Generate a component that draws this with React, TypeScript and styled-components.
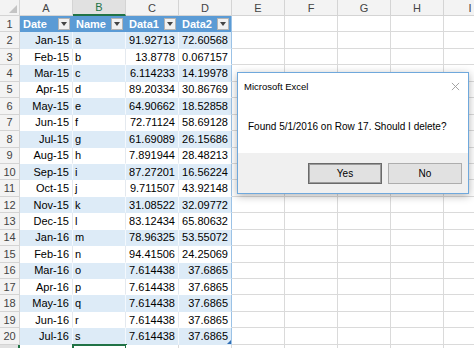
import React from "react";
import styled, { createGlobalStyle } from "styled-components";

const GlobalStyle = createGlobalStyle`
  html, body {
    margin: 0;
    padding: 0;
    background: #ffffff;
    overflow: hidden;
  }
  body {
    font-family: "Liberation Sans", Arial, sans-serif;
  }
`;

const COLS = ["A", "B", "C", "D", "E", "F", "G", "H", "I"];

const rows: [string, string, string, string][] = [
  ["Jan-15", "a", "91.92713", "72.60568"],
  ["Feb-15", "b", "13.8778", "0.067157"],
  ["Mar-15", "c", "6.114233", "14.19978"],
  ["Apr-15", "d", "89.20334", "30.86769"],
  ["May-15", "e", "64.90662", "18.52858"],
  ["Jun-15", "f", "72.71124", "58.69128"],
  ["Jul-15", "g", "61.69089", "26.15686"],
  ["Aug-15", "h", "7.891944", "28.48213"],
  ["Sep-15", "i", "87.27201", "16.56224"],
  ["Oct-15", "j", "9.711507", "43.92148"],
  ["Nov-15", "k", "31.08522", "32.09772"],
  ["Dec-15", "l", "83.12434", "65.80632"],
  ["Jan-16", "m", "78.96325", "53.55072"],
  ["Feb-16", "n", "94.41506", "24.25069"],
  ["Mar-16", "o", "7.614438", "37.6865"],
  ["Apr-16", "p", "7.614438", "37.6865"],
  ["May-16", "q", "7.614438", "37.6865"],
  ["Jun-16", "r", "7.614438", "37.6865"],
  ["Jul-16", "s", "7.614438", "37.6865"],
];

const headers = ["Date", "Name", "Data1", "Data2"];

const Page = styled.div`
  position: relative;
  width: 474px;
  height: 348px;
  overflow: hidden;
`;

const Sheet = styled.div`
  display: grid;
  grid-template-columns: 20px repeat(9, 53px);
  grid-template-rows: 16px repeat(21, 16.45px);
  font-size: 11px;
  color: #000;
`;

const Corner = styled.div`
  position: relative;
  background: #f3f3f3;
  border-right: 1px solid #d4d4d4;
  border-bottom: 1px solid #d4d4d4;
  box-sizing: border-box;

  &::after {
    content: "";
    position: absolute;
    right: 2px;
    bottom: 2px;
    border-style: solid;
    border-width: 0 0 8px 8px;
    border-color: transparent transparent #c4c4c4 transparent;
  }
`;

const ColHead = styled.div<{ $selected?: boolean }>`
  box-sizing: border-box;
  display: flex;
  align-items: center;
  justify-content: center;
  background: ${(p) => (p.$selected ? "#e1e1e1" : "#f3f3f3")};
  color: ${(p) => (p.$selected ? "#217346" : "#444")};
  border-right: 1px solid #d4d4d4;
  border-bottom: ${(p) => (p.$selected ? "2px solid #217346" : "1px solid #d4d4d4")};
  font-size: 11px;
`;

const RowHead = styled.div<{ $selected?: boolean }>`
  box-sizing: border-box;
  display: flex;
  align-items: center;
  justify-content: center;
  background: ${(p) => (p.$selected ? "#e1e1e1" : "#f3f3f3")};
  color: ${(p) => (p.$selected ? "#217346" : "#444")};
  border-right: ${(p) => (p.$selected ? "2px solid #217346" : "1px solid #d4d4d4")};
  border-bottom: 1px solid #d4d4d4;
  font-size: 11px;
`;

const Cell = styled.div<{ $band?: "blue" | "white"; $align?: "left" | "right"; $edge?: boolean; $active?: boolean }>`
  box-sizing: border-box;
  position: relative;
  display: flex;
  align-items: center;
  justify-content: ${(p) => (p.$align === "right" ? "flex-end" : "flex-start")};
  padding: 0 3px 0 2px;
  white-space: nowrap;
  background: ${(p) => (p.$band === "blue" ? "#ddebf7" : "#ffffff")};
  border-right: 1px solid
    ${(p) => (p.$edge ? "#9bc2e6" : p.$band === "blue" ? "#f3f8fd" : p.$band === "white" ? "#e4e9ef" : "#dadada")};
  border-bottom: 1px solid ${(p) => (p.$band ? "transparent" : "#dadada")};
  ${(p) => (p.$active ? "outline: 2px solid #217346; outline-offset: -1px;" : "")}
`;

const ResizeMark = styled.span`
  position: absolute;
  right: 0;
  bottom: 0;
  border-style: solid;
  border-width: 0 0 4px 4px;
  border-color: transparent transparent #2f6eb5 transparent;
`;

const HeadCell = styled.div<{ $edge?: boolean }>`
  box-sizing: border-box;
  display: flex;
  align-items: center;
  justify-content: space-between;
  padding: 0 2px 0 3px;
  background: #5b9bd5;
  color: #ffffff;
  font-weight: bold;
  font-size: 11px;
  border-right: 1px solid ${(p) => (p.$edge ? "#9bc2e6" : "#5b9bd5")};
`;

const FilterButton = styled.span`
  box-sizing: border-box;
  width: 12px;
  height: 12px;
  display: flex;
  align-items: center;
  justify-content: center;
  background: #f1f1f1;
  border: 1px solid #b4b4b4;

  &::before {
    content: "";
    border-style: solid;
    border-width: 4px 3px 0 3px;
    border-color: #444 transparent transparent transparent;
  }
`;

const Dialog = styled.div`
  position: absolute;
  left: 237px;
  top: 72px;
  width: 232px;
  box-sizing: border-box;
  background: #ffffff;
  border: 1px solid #6fa8dc;
  box-shadow: 0 2px 8px rgba(0, 0, 0, 0.3);
  font-family: "Liberation Sans", Arial, sans-serif;
  color: #000;
`;

const TitleBar = styled.div`
  height: 26px;
  display: flex;
  align-items: center;
  justify-content: space-between;
  padding: 0 8px 0 6px;
  font-size: 9.5px;
`;

const CloseIcon = styled.svg`
  width: 9px;
  height: 9px;
`;

const Message = styled.div`
  height: 54px;
  display: flex;
  align-items: center;
  padding: 0 10px;
  font-size: 10px;
`;

const Footer = styled.div`
  height: 40px;
  box-sizing: border-box;
  display: flex;
  justify-content: flex-end;
  align-items: flex-start;
  gap: 6px;
  padding: 10px 6px 0 0;
  background: #f0f0f0;
`;

const Button = styled.button<{ $primary?: boolean }>`
  width: 74px;
  height: 21px;
  box-sizing: border-box;
  background: #e1e1e1;
  border: 1px solid ${(p) => (p.$primary ? "#6a6a6a" : "#adadad")};
  box-shadow: ${(p) => (p.$primary ? "inset 0 0 0 1px #9a9a9a" : "none")};
  font-family: "Liberation Sans", Arial, sans-serif;
  font-size: 10px;
  color: #000;
  padding: 0;
`;

export default function App() {
  const cells: React.ReactNode[] = [];

  cells.push(<Corner key="corner" />);
  COLS.forEach((c) =>
    cells.push(
      <ColHead key={`h-${c}`} $selected={c === "B"}>
        {c}
      </ColHead>
    )
  );

  // row 1: table headers
  cells.push(<RowHead key="r1">1</RowHead>);
  headers.forEach((h, i) =>
    cells.push(
      <HeadCell key={`th-${h}`} $edge={i === 3}>
        {h}
        <FilterButton />
      </HeadCell>
    )
  );
  COLS.slice(4).forEach((c) => cells.push(<Cell key={`1-${c}`} />));

  rows.forEach((r, idx) => {
    const n = idx + 2;
    const band = n % 2 === 0 ? "blue" : "white";
    const last = idx === rows.length - 1;
    cells.push(<RowHead key={`r${n}`}>{n}</RowHead>);
    cells.push(
      <Cell key={`${n}-A`} $band={band} $align="right">
        {r[0]}
      </Cell>
    );
    cells.push(
      <Cell key={`${n}-B`} $band={band}>
        {r[1]}
      </Cell>
    );
    cells.push(
      <Cell key={`${n}-C`} $band={band} $align="right">
        {r[2]}
      </Cell>
    );
    cells.push(
      <Cell key={`${n}-D`} $band={band} $align="right" $edge>
        {r[3]}
        {last && <ResizeMark />}
      </Cell>
    );
    COLS.slice(4).forEach((c) => cells.push(<Cell key={`${n}-${c}`} />));
  });

  // row 21 is only a sliver at the bottom edge, so its label is left out
  cells.push(<RowHead key="r21" $selected />);
  COLS.forEach((c) => cells.push(<Cell key={`21-${c}`} $active={c === "B"} />));

  return (
    <Page>
      <GlobalStyle />
      <Sheet>{cells}</Sheet>
      <Dialog>
        <TitleBar>
          <span>Microsoft Excel</span>
          <CloseIcon viewBox="0 0 10 10">
            <path d="M1 1 L9 9 M9 1 L1 9" stroke="#9a9a9a" strokeWidth="1" fill="none" />
          </CloseIcon>
        </TitleBar>
        <Message>Found 5/1/2016 on Row 17. Should I delete?</Message>
        <Footer>
          <Button $primary>Yes</Button>
          <Button>No</Button>
        </Footer>
      </Dialog>
    </Page>
  );
}
